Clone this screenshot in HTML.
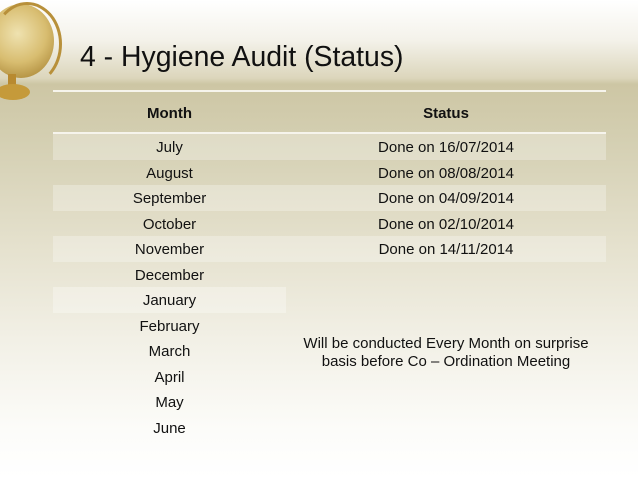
<html><head><style>
body{margin:0;width:638px;height:478px;overflow:hidden;position:relative;font-family:"Liberation Sans",sans-serif;
background:linear-gradient(to bottom,#fff 0px,#f4f2ea 40px,#dcd6bc 78px,#cdc6a4 84px,#d4cfb2 140px,#e4e0cc 240px,#f2f0e6 340px,#fcfcf9 430px,#fff 478px);}
.g{position:absolute;left:-12px;top:4px;width:66px;height:74px;border-radius:50%;background:radial-gradient(circle at 45% 40%,#efe2b0,#d8bd70 50%,#a88434 90%);}
.arc{position:absolute;left:-8px;top:2px;width:64px;height:78px;border-radius:50%;border:3px solid #b8903a;border-left-color:transparent;border-bottom-color:transparent;}
.base{position:absolute;left:-4px;top:84px;width:34px;height:16px;border-radius:50%;background:#c59a3a;}
.stem{position:absolute;left:8px;top:74px;width:8px;height:14px;background:#b88a30}
h1{position:absolute;left:80px;top:41px;margin:0;font-weight:normal;font-size:28.4px;color:#111;}
.line{position:absolute;left:53px;width:553px;height:2px;background:#f6f4ec;}
.r{position:absolute;left:53px;width:553px;height:25.5px;font-size:15px;color:#111;line-height:27px}
.r span{position:absolute;text-align:center}
.m{left:0;width:233px}.s{left:233px;width:320px}
.hl{background:rgba(255,255,255,.28)}
</style></head><body>
<div class="g"></div><div class="arc"></div><div class="stem"></div><div class="base"></div>
<h1>4 - Hygiene Audit (Status)</h1>
<div class="line" style="top:90px"></div>
<div class="r" style="top:100px;font-weight:bold"><span class="m">Month</span><span class="s">Status</span></div>
<div class="line" style="top:132px"></div>
<div class="r hl" style="top:134px"><span class="m">July</span><span class="s">Done on 16/07/2014</span></div>
<div class="r" style="top:159.5px"><span class="m">August</span><span class="s">Done on 08/08/2014</span></div>
<div class="r hl" style="top:185px"><span class="m">September</span><span class="s">Done on 04/09/2014</span></div>
<div class="r" style="top:210.5px"><span class="m">October</span><span class="s">Done on 02/10/2014</span></div>
<div class="r hl" style="top:236px"><span class="m">November</span><span class="s">Done on 14/11/2014</span></div>
<div class="r" style="top:261.5px"><span class="m">December</span></div>
<div class="r" style="top:287px;width:233px;background:rgba(255,255,255,.3)"><span class="m">January</span></div>
<div class="r" style="top:312.5px"><span class="m">February</span></div>
<div class="r" style="top:338px"><span class="m">March</span></div>
<div class="r" style="top:363.5px"><span class="m">April</span></div>
<div class="r" style="top:389px"><span class="m">May</span></div>
<div class="r" style="top:414.5px"><span class="m">June</span></div>
<div style="position:absolute;left:286px;width:320px;top:335px;text-align:center;font-size:15px;line-height:18px;color:#111">Will be conducted Every Month on surprise<br>basis before Co – Ordination Meeting</div>
</body></html>
